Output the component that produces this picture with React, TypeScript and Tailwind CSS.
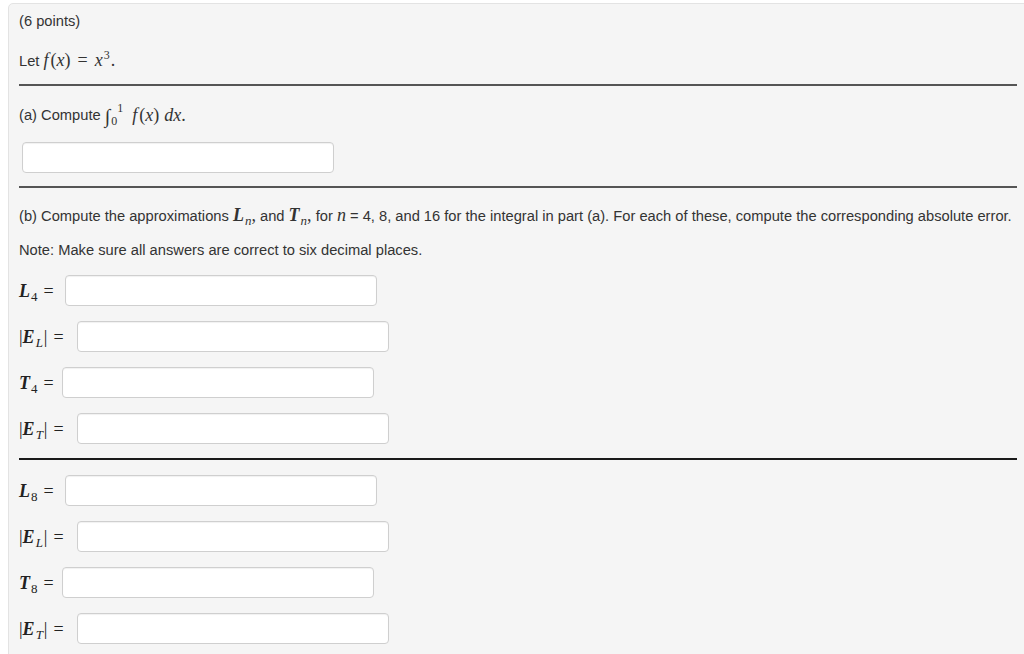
import React from "react";

const SERIF = '"Liberation Serif", "DejaVu Serif", serif';

const M = ({ children, className = "" }: { children: React.ReactNode; className?: string }) => (
  <span className={`italic ${className}`} style={{ fontFamily: SERIF }}>
    {children}
  </span>
);
const R = ({ children, className = "" }: { children: React.ReactNode; className?: string }) => (
  <span className={className} style={{ fontFamily: SERIF }}>
    {children}
  </span>
);

const Input = () => (
  <div className="w-[312px] h-[31px] bg-white border border-[#cfcfcf] rounded-[4px] shadow-[inset_0_1px_1px_rgba(0,0,0,0.06)]" />
);

const Row = ({ label, gap }: { label: React.ReactNode; gap: string }) => (
  <div className="flex items-center h-[31px] mt-[15px]">
    <div className={`text-[18px] text-[#222] font-semibold whitespace-nowrap leading-none ${gap}`}>{label}</div>
    <Input />
  </div>
);

const Hr = ({ dark = false }: { dark?: boolean }) => (
  <div className={`h-[2px] w-[998px] ${dark ? "bg-[#1a1a1a]" : "bg-[#555]"}`} />
);

const Sub = ({ children, italic = false }: { children: React.ReactNode; italic?: boolean }) => (
  <span
    className={`text-[13px] font-normal ${italic ? "italic" : "not-italic"} relative top-[4px] ml-[1px]`}
    style={{ fontFamily: SERIF }}
  >
    {children}
  </span>
);

const Eq = () => <R className="mx-[6px] font-normal">=</R>;

const L = (n: string) => (
  <span>
    <M>L</M>
    <Sub>{n}</Sub>
    <Eq />
  </span>
);
const T = (n: string) => (
  <span>
    <M>T</M>
    <Sub>{n}</Sub>
    <Eq />
  </span>
);
const E = (s: string) => (
  <span>
    <R className="font-normal">|</R>
    <M>E</M>
    <Sub italic>{s}</Sub>
    <R className="font-normal ml-[1px]">|</R>
    <Eq />
  </span>
);

export default function App() {
  return (
    <div className="w-[1024px] h-[654px] bg-white overflow-hidden" style={{ fontFamily: '"Liberation Sans", Arial, sans-serif' }}>
      <div className="ml-[8px] mt-[3px] bg-[#f5f5f5] border border-[#e3e3e3] rounded-[5px] pl-[10px] pt-[7px] h-[700px] w-[1030px] text-[14.7px] text-[#333]">
        <div className="h-[20px] leading-[20px]">(6 points)</div>
        <div className="h-[20px] leading-[20px] mt-[19px] whitespace-nowrap">
          Let <M className="text-[18px]">f</M>
          <R className="text-[18px] ml-[2px]">(</R>
          <M className="text-[18px]">x</M>
          <R className="text-[18px]">)</R>
          <R className="text-[18px] mx-[7px]">=</R>
          <M className="text-[18px]">x</M>
          <R className="text-[12px] relative top-[-7px] ml-[1px]">3</R>
          <R className="text-[18px] ml-[1px]">.</R>
        </div>
        <div className="mt-[14px]"><Hr /></div>
        <div className="h-[20px] leading-[20px] mt-[19px] flex items-center whitespace-nowrap">
          <span>(a) Compute&nbsp;</span>
          <span className="relative inline-flex items-center">
            <M className="text-[20px] relative top-[1px]">∫</M>
            <R className="text-[12px] relative top-[6px] ml-[1px]">0</R>
            <R className="text-[12px] relative top-[-7px] ml-[0px]">1</R>
          </span>
          <span className="ml-[9px]">
            <M className="text-[18px]">f</M>
            <R className="text-[18px] ml-[2px]">(</R>
            <M className="text-[18px]">x</M>
            <R className="text-[18px]">)</R>
            <M className="text-[18px] ml-[5px]">dx</M>
            <R className="text-[18px]">.</R>
          </span>
        </div>
        <div className="mt-[17px] ml-[3px]"><Input /></div>
        <div className="mt-[13px]"><Hr /></div>
        <div className="h-[20px] leading-[20px] mt-[17px] whitespace-nowrap">
          (b) Compute the approximations <M className="text-[18px] font-semibold">L<Sub italic>n</Sub></M><R className="text-[18px]">,</R> and{" "}
          <M className="text-[18px] font-semibold">T<Sub italic>n</Sub></M><R className="text-[18px]">,</R> for <M className="text-[18px]">n</M> = 4, 8, and 16 for the integral in part (a). For each of these, compute the corresponding absolute error.
        </div>
        <div className="h-[20px] leading-[20px] mt-[15px]">Note: Make sure all answers are correct to six decimal places.</div>
        <Row label={L("4")} gap="mr-[5px]" />
        <Row label={E("L")} gap="mr-[7px]" />
        <Row label={T("4")} gap="mr-[2px]" />
        <Row label={E("T")} gap="mr-[7px]" />
        <div className="mt-[14px]"><Hr dark /></div>
        <Row label={L("8")} gap="mr-[5px]" />
        <Row label={E("L")} gap="mr-[7px]" />
        <Row label={T("8")} gap="mr-[2px]" />
        <Row label={E("T")} gap="mr-[7px]" />
      </div>
    </div>
  );
}
